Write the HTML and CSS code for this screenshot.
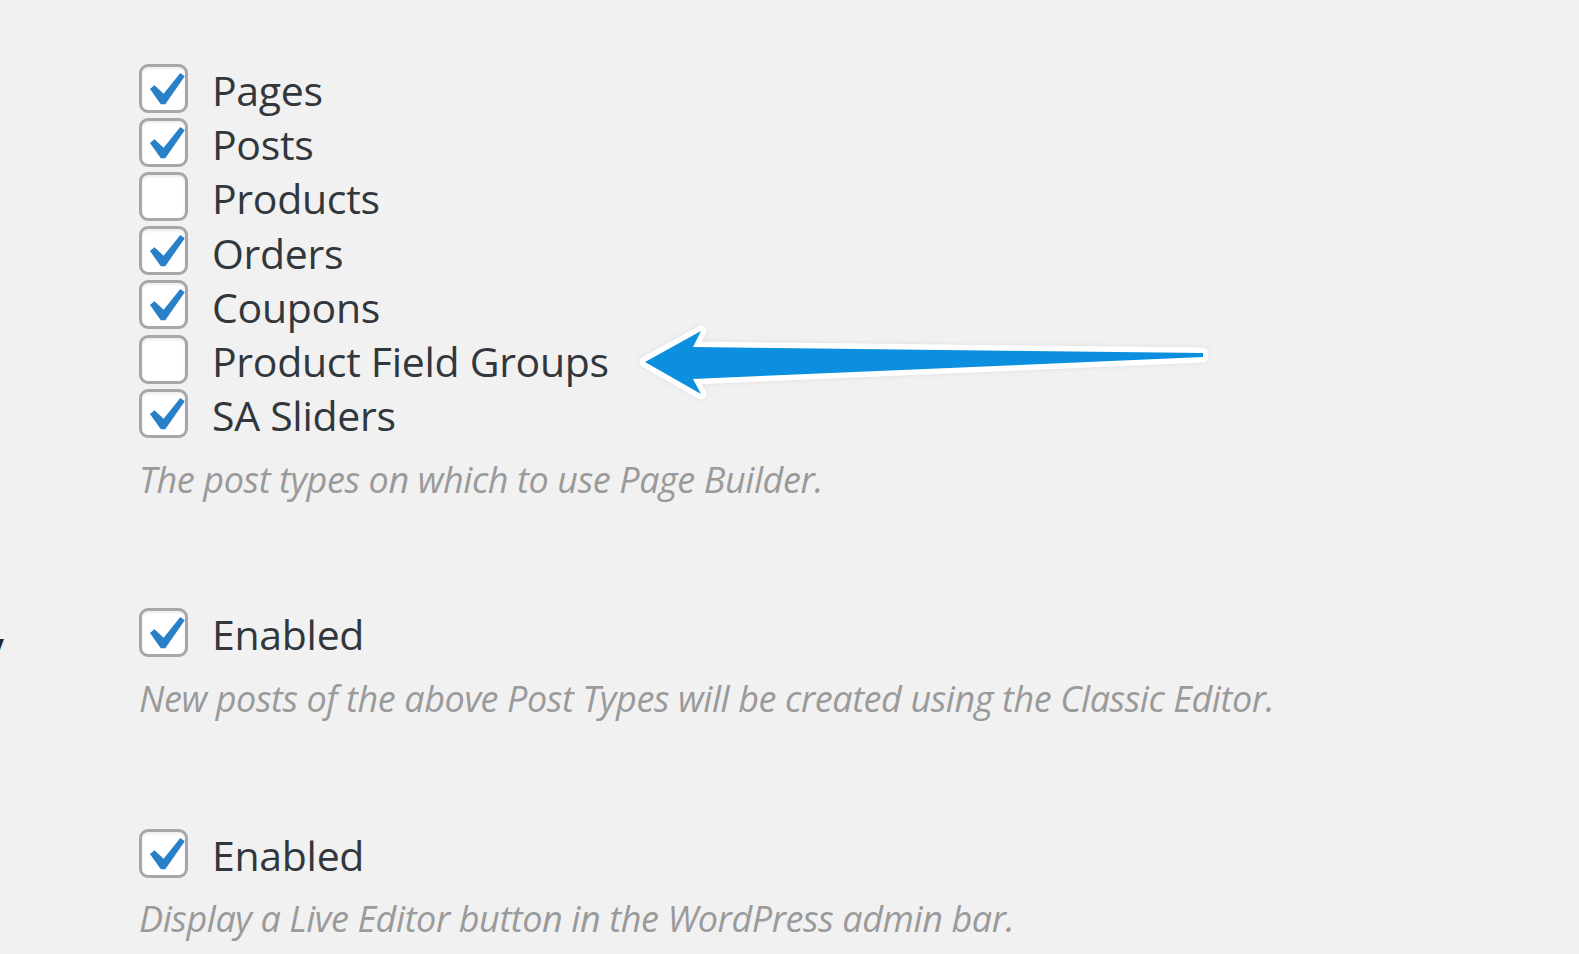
FILE: index.html
```html
<!DOCTYPE html>
<html>
<head>
<meta charset="utf-8">
<link rel="stylesheet" href="styles.css">
</head>
<body>
<div class="page">
  <section class="setting setting-types">
    <div class="th"></div>
    <div class="td">
      <ul class="checklist">
        <li class="row"><span class="cb on"></span><span class="label">Pages</span></li>
        <li class="row"><span class="cb on"></span><span class="label">Posts</span></li>
        <li class="row"><span class="cb"></span><span class="label">Products</span></li>
        <li class="row"><span class="cb on"></span><span class="label">Orders</span></li>
        <li class="row"><span class="cb on"></span><span class="label">Coupons</span></li>
        <li class="row"><span class="cb"></span><span class="label">Product Field Groups</span></li>
        <li class="row"><span class="cb on"></span><span class="label">SA Sliders</span></li>
      </ul>
      <p class="desc desc-1">The post types on which to use Page Builder.</p>
    </div>
    <svg class="arrow" width="600" height="90" viewBox="620 310 600 90">
      <defs>
        <filter id="glow" x="-10%" y="-50%" width="120%" height="200%">
          <feGaussianBlur in="SourceAlpha" stdDeviation="2.5"/>
          <feColorMatrix type="matrix" values="0 0 0 0 0.55  0 0 0 0 0.55  0 0 0 0 0.55  0 0 0 0.45 0"/>
          <feMerge><feMergeNode/><feMergeNode in="SourceGraphic"/></feMerge>
        </filter>
      </defs>
      <path filter="url(#glow)" d="M645 362 L701 331 L693 347 L1203 353 L1203 357 L693 379 L701 394 Z" fill="#0b8fdf" stroke="#ffffff" stroke-width="11" stroke-linejoin="round" paint-order="stroke"/>
    </svg>
  </section>

  <section class="setting setting-classic">
    <div class="th"><span class="th-label">y</span></div>
    <div class="td">
      <div class="row"><span class="cb on"></span><span class="label">Enabled</span></div>
      <p class="desc desc-2">New posts of the above Post Types will be created using the Classic Editor.</p>
    </div>
  </section>

  <section class="setting setting-live">
    <div class="th"></div>
    <div class="td">
      <div class="row"><span class="cb on"></span><span class="label">Enabled</span></div>
      <p class="desc desc-3">Display a Live Editor button in the WordPress admin bar.</p>
    </div>
  </section>
</div>
</body>
</html>
```
FILE: styles.css
```css
html, body {
  margin: 0;
  padding: 0;
  background: #f1f1f1;
  overflow: hidden;
}
body {
  width: 1579px;
  height: 954px;
  font-family: "Open Sans", "Noto Sans", sans-serif;
  color: #32373c;
}
.page {
  padding-top: 61px;
}
.setting {
  display: flex;
  position: relative;
}
.th {
  width: 139px;
  flex: none;
  overflow: hidden;
  position: relative;
}
.th-label {
  display: block;
  margin-left: -20px;
  margin-top: 14px;
  font-weight: 700;
  font-size: 42px;
  line-height: 54px;
  color: #23282d;
}
.td {
  flex: 1;
}
.checklist {
  list-style: none;
  margin: 0;
  padding: 0;
}
.row {
  display: flex;
  align-items: center;
  height: 54.2px;
}
.cb {
  width: 49px;
  height: 49px;
  flex: none;
  box-sizing: border-box;
  border: 3px solid #a5a7aa;
  border-radius: 9px;
  background: #ffffff;
  box-shadow: inset 0 2px 3px rgba(0,0,0,0.08);
  position: relative;
}
.cb.on::after {
  content: "";
  position: absolute;
  left: -3px;
  top: -3px;
  width: 49px;
  height: 49px;
  background: no-repeat center/49px 49px url("data:image/svg+xml;utf8,<svg xmlns='http://www.w3.org/2000/svg' viewBox='0 0 49 49'><g transform='translate(-8.4,-7.4) scale(3.35)'><path d='M14.83 4.89l1.34.94-5.81 8.38H9.02L5.78 9.67l1.34-1.12 2.74 2.57z' fill='%232880c8'/></g></svg>");
}
.label {
  margin-left: 24px;
  padding-top: 4px;
  font-size: 41px;
  line-height: 54px;
  letter-spacing: -0.3px;
  color: #32373c;
}
.desc {
  margin: 0;
  font-style: italic;
  font-size: 36px;
  line-height: 54px;
  color: #9a9a9a;
  letter-spacing: -0.42px;
  white-space: nowrap;
}
.desc-1 { margin-top: 12.6px; }
.setting-classic { margin-top: 98px; }
.desc-2 { margin-top: 13px; }
.setting-live { margin-top: 100px; }
.desc-3 { margin-top: 12px; }
.arrow {
  position: absolute;
  left: 620px;
  top: 249px;
  overflow: visible;
}
```
